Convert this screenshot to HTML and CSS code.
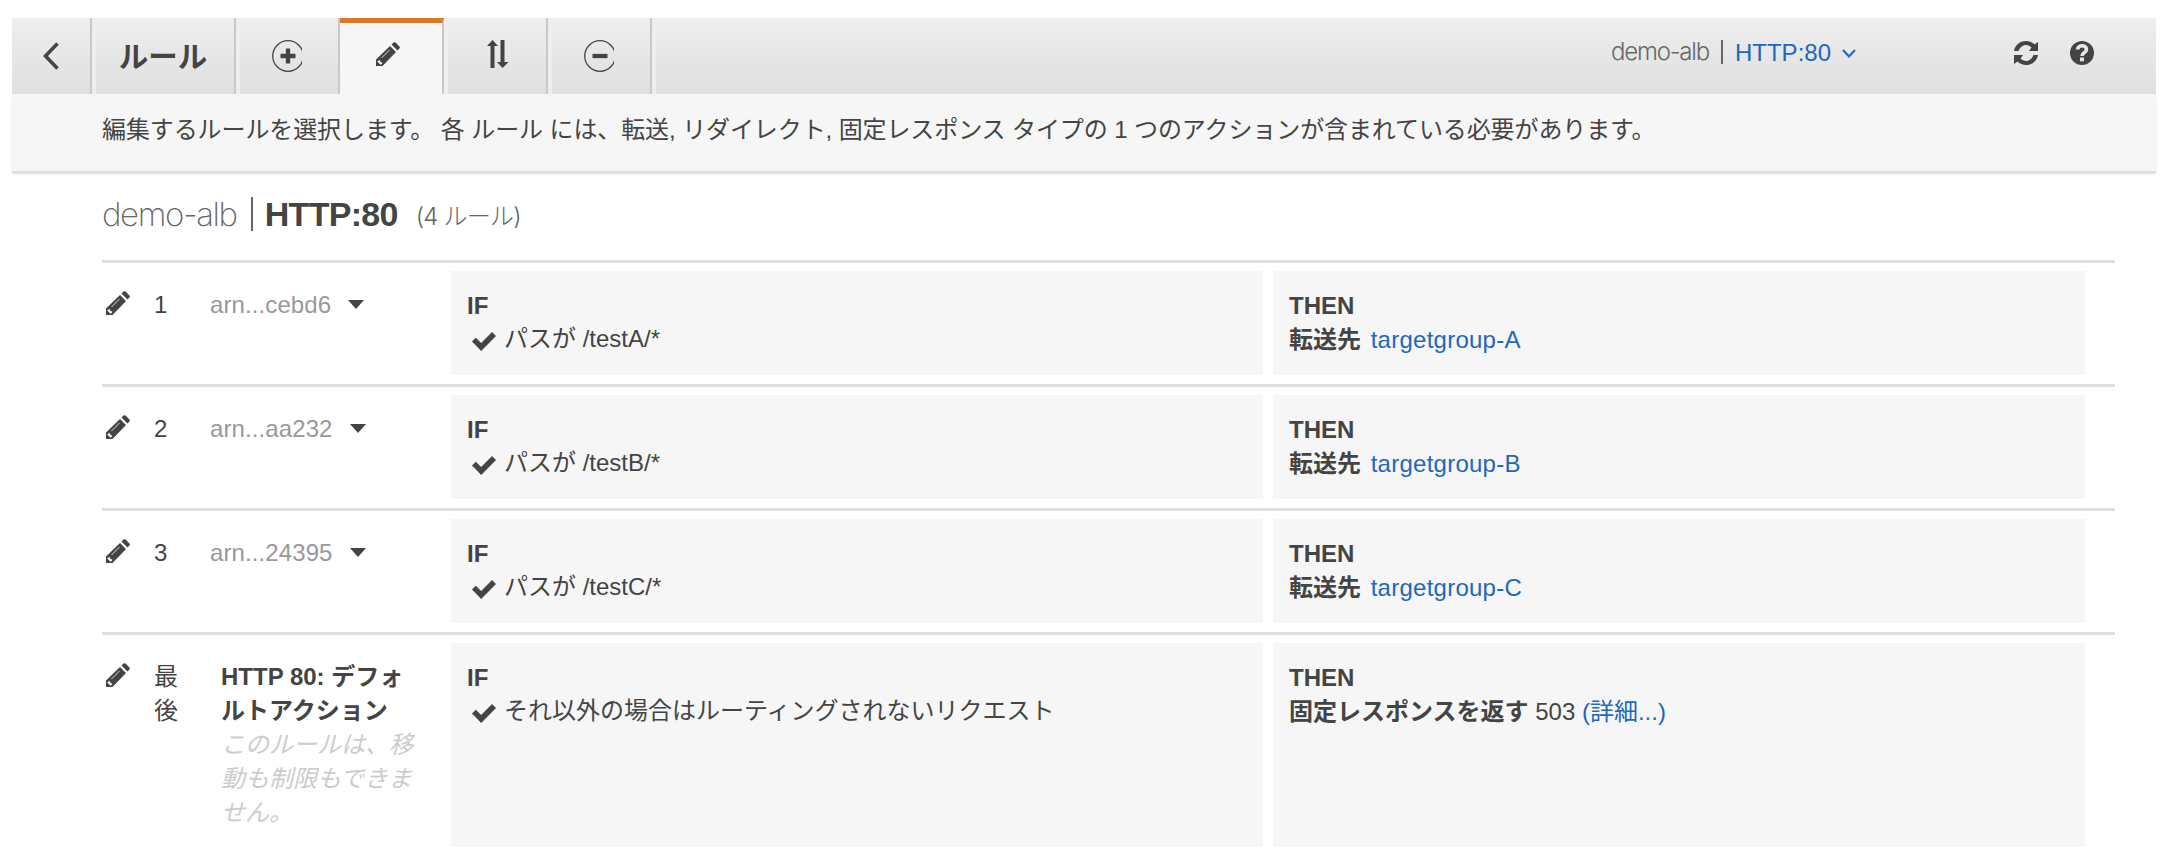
FILE: index.html
```html
<!DOCTYPE html>
<html lang="ja">
<head>
    <meta charset="UTF-8">
    <meta name="viewport" content="width=device-width, initial-scale=1.0">
    <title>ルール</title>
    <link rel="stylesheet" href="styles.css">
</head>
<body>

    <!-- shared icons -->
    <svg class="sprite">
        <symbol id="pencil" viewBox="0 0 24 24">
            <path d="M0 24 V17.500 L14 4 L20 10 L6.500 24 Z M15.500 2.500 L17.500 0.600 Q18.500 -0.300 19.600 0.600 L23.400 4.400 Q24.300 5.500 23.400 6.500 L21.500 8.500 Z"/>
            <path class="pencil-line" d="M5.500 16 L13.500 8 M2.500 18.800 L3.700 18.500 L4 20.500 L5.800 20.700 L5.500 21.800 L4.500 22.300 L1.800 19.600 Z"/>
        </symbol>
        <symbol id="check" viewBox="0 0 24 19">
            <path d="M0 9.500 L3.800 5.700 L9.200 11 L20 0 L24 3.900 L9.200 19 Z"/>
        </symbol>
    </svg>

    <div class="toolbar">
        <div class="tab back">
            <svg width="16" height="28" viewBox="0 0 16 28"><path class="stroke" d="M14.500 1.500 L2.500 14 L14.500 26.500" stroke-width="3.500"/></svg>
        </div>
        <div class="tab title">ルール</div>
        <div class="tab">
            <svg class="circle" width="30" height="32" viewBox="0 0 30 32"><circle class="stroke" cx="16" cy="16" r="15.300" stroke-width="1.300"/><path class="stroke" d="M8.500 16 H23.500 M16 8.500 V23.500" stroke-width="4.300"/></svg>
        </div>
        <div class="tab active">
            <svg class="icon" width="24" height="24"><use href="#pencil"/></svg>
        </div>
        <div class="tab">
            <svg class="icon sort" width="22" height="28" viewBox="0 0 22 28"><path d="M5.500 0 L11 6 H7.500 V28 H3.500 V6 H0 Z M13.500 0 H17.500 V22 H21.500 L15.500 28 L10 22 H13.500 Z"/></svg>
        </div>
        <div class="tab">
            <svg class="circle" width="30" height="32" viewBox="0 0 30 32"><circle class="stroke" cx="16" cy="16" r="15.300" stroke-width="1.300"/><path class="stroke" d="M8.500 16 H23.500" stroke-width="4.300"/></svg>
        </div>
        <div class="tab-end"></div>
        <div class="toolbar-right">
            <span class="lb-name">demo-alb</span>
            <span class="divider"></span>
            <a class="listener">HTTP:80</a>
            <svg class="chevron" width="14" height="10" viewBox="0 0 14 10"><path d="M1 1 L7 7.500 L13 1"/></svg>
            <svg class="icon refresh" width="24" height="24" viewBox="0 0 24 24"><path d="M0 10 C1 4 6 0 12 0 C15.300 0 18.300 1.300 20.500 3.500 L24 1 V10 H15 L17.500 6.500 C16 5 14 4 12 4 C8.500 4 6 6.500 4.500 10 Z M24 14 C23 20 18 24 12 24 C8.700 24 5.700 22.700 3.500 20.500 L0 23 V14 H9 L6.500 17.500 C8 19 10 20 12 20 C15.500 20 18 17.500 19.500 14 Z"/></svg>
            <svg class="icon help" width="24" height="24" viewBox="0 0 24 24"><circle cx="12" cy="12" r="12"/><path class="mark" d="M7.500 8.500 C8 3.500 16.500 3.500 16.500 8.500 C16.500 11.500 12 11.500 12 15"/><path class="dot" d="M10 16.500 H14 V20.300 H10 Z"/></svg>
        </div>
    </div>
    <div class="message">編集するルールを選択します。 各 ルール には、転送, リダイレクト, 固定レスポンス タイプの 1 つのアクションが含まれている必要があります。</div>

    <div class="content">
        <div class="heading">
            <span class="heading-name">demo-alb</span>
            <span class="divider"></span>
            <b>HTTP:80</b>
            <span class="count">(4 ルール)</span>
        </div>

        <div class="rule">
            <svg class="icon edit" width="24" height="24"><use href="#pencil"/></svg>
            <div class="number">1</div>
            <div class="arn"><span>arn...cebd6</span><i class="caret"></i></div>
            <div class="box">
                <b>IF</b>
                <div class="condition"><svg class="icon" width="24" height="19"><use href="#check"/></svg><span>パスが /testA/*</span></div>
            </div>
            <div class="box">
                <b>THEN</b>
                <div class="action"><b>転送先</b> <a class="target">targetgroup-A</a></div>
            </div>
        </div>

        <div class="rule">
            <svg class="icon edit" width="24" height="24"><use href="#pencil"/></svg>
            <div class="number">2</div>
            <div class="arn"><span>arn...aa232</span><i class="caret"></i></div>
            <div class="box">
                <b>IF</b>
                <div class="condition"><svg class="icon" width="24" height="19"><use href="#check"/></svg><span>パスが /testB/*</span></div>
            </div>
            <div class="box">
                <b>THEN</b>
                <div class="action"><b>転送先</b> <a class="target">targetgroup-B</a></div>
            </div>
        </div>

        <div class="rule">
            <svg class="icon edit" width="24" height="24"><use href="#pencil"/></svg>
            <div class="number">3</div>
            <div class="arn"><span>arn...24395</span><i class="caret"></i></div>
            <div class="box">
                <b>IF</b>
                <div class="condition"><svg class="icon" width="24" height="19"><use href="#check"/></svg><span>パスが /testC/*</span></div>
            </div>
            <div class="box">
                <b>THEN</b>
                <div class="action"><b>転送先</b> <a class="target">targetgroup-C</a></div>
            </div>
        </div>

        <div class="rule last">
            <svg class="icon edit" width="24" height="24"><use href="#pencil"/></svg>
            <div class="number">最後</div>
            <div class="default-rule">
                <b>HTTP 80: デフォ<br>ルトアクション</b>
                <div class="note">このルールは、移<br>動も制限もできま<br>せん。</div>
            </div>
            <div class="box">
                <b>IF</b>
                <div class="condition"><svg class="icon" width="24" height="19"><use href="#check"/></svg><span>それ以外の場合はルーティングされないリクエスト</span></div>
            </div>
            <div class="box">
                <b>THEN</b>
                <div class="action"><b>固定レスポンスを返す</b> 503 <a>(詳細...)</a></div>
            </div>
        </div>
    </div>

</body>
</html>
```
FILE: styles.css
```css
* {
    box-sizing: border-box;
}

body {
    margin: 0;
    padding: 18px 16px 0 12px;
    background: #fff;
    color: #444;
    font-family: "Liberation Sans", "Noto Sans CJK JP", sans-serif;
    font-size: 24px;
    line-height: 34px;
}

a {
    color: #1f66bd;
}

.sprite {
    display: none;
}

.icon {
    fill: #444;
    flex: none;
}

.stroke {
    fill: none;
    stroke: #444;
}

.pencil-line {
    fill: #fff;
    stroke: #fff;
    stroke-width: 0.8;
}

.toolbar {
    display: flex;
    height: 76px;
    background: linear-gradient(#eee, #dfdfdf);
}

.tab {
    width: 104px;
    display: flex;
    align-items: center;
    justify-content: center;
    border-left: 4px solid #eee;
    border-right: 2px solid #c8c8c8;
}

.tab.back {
    width: 80px;
    border-left: none;
}

.tab.title {
    width: 144px;
    padding: 2px 4px 0 0;
    font-size: 29.5px;
    font-weight: bold;
}

.tab.active {
    background: #f6f6f6;
    border-left: none;
    border-top: 5px solid #dd7b25;
    padding-right: 6px;
    padding-bottom: 9px;
}

.tab-end {
    width: 4px;
    background: #eee;
}

.circle {
    margin-right: 4px;
}

.sort {
    margin: 0 0 4px 1px;
}

.toolbar-right {
    display: flex;
    margin-left: auto;
    height: 70px;
    align-items: center;
}

.lb-name {
    margin-bottom: 3px;
    font-family: Inter, sans-serif;
    font-weight: 300;
    letter-spacing: -1.2px;
    color: #666;
}

.divider {
    width: 2px;
    height: 24px;
    background: #666;
    margin: 0 12px;
}

.toolbar .divider {
    margin-bottom: 2px;
}

.listener {
    margin-bottom: 1px;
}

.chevron {
    margin: 2px 158px 0 11px;
    fill: none;
    stroke: #1f66bd;
    stroke-width: 2;
}

.help {
    margin: 0 62px 0 32px;
}

.mark {
    fill: none;
    stroke: #e6e6e6;
    stroke-width: 3.6;
}

.dot {
    fill: #e6e6e6;
}

.message {
    height: 77px;
    padding: 19px 0 0 90px;
    background: #f6f6f6;
    box-shadow: 0 3px 2px #ddd;
    letter-spacing: -0.1px;
    white-space: nowrap;
}

.content {
    width: 2013px;
    margin-left: 90px;
}

.heading {
    display: flex;
    align-items: center;
    height: 89px;
    padding-bottom: 4px;
    font-size: 34px;
}

.heading b {
    letter-spacing: -0.7px;
}

.heading-name {
    font-family: Inter, sans-serif;
    font-size: 33px;
    font-weight: 200;
    letter-spacing: -1.4px;
    color: #666;
}

.heading .divider {
    height: 34px;
    margin-left: 14px;
}

.count {
    margin: 6px 0 0 18px;
    font-family: Inter, "Noto Sans CJK JP", sans-serif;
    font-size: 24px;
    font-weight: 300;
    letter-spacing: -0.8px;
    color: #666;
}

.rule {
    display: grid;
    grid-template-columns: 52px 56px 241px 812px 812px;
    height: 124px;
    padding: 8px 0 9px;
    border-top: 3px solid #dfdfdf;
}

.rule .box:last-child {
    margin-left: 10px;
    margin-right: -10px;
}

.rule.last {
    height: 215px;
    padding-bottom: 0;
}

.edit {
    margin: 20px 0 0 4px;
}

.number {
    width: 26px;
    padding-top: 17px;
}

.arn {
    display: flex;
    height: 67px;
    align-items: center;
    color: #999;
    letter-spacing: 0.1px;
}

.caret {
    margin-left: 17px;
    border: 8px solid transparent;
    border-top: 9px solid #444;
    border-bottom: none;
}

.box {
    padding: 18px 16px;
    background: #f6f6f6;
    white-space: nowrap;
}

.box > b {
    display: block;
    height: 34px;
}

.condition {
    display: flex;
    align-items: center;
    height: 31px;
}

.condition .icon {
    margin: 5px 8px 0 5px;
}

.target {
    margin-left: 3px;
    letter-spacing: 0.25px;
}

.default-rule {
    padding: 17px 0 0 11px;
}

.note {
    color: #ccc;
    font-style: italic;
}
```
